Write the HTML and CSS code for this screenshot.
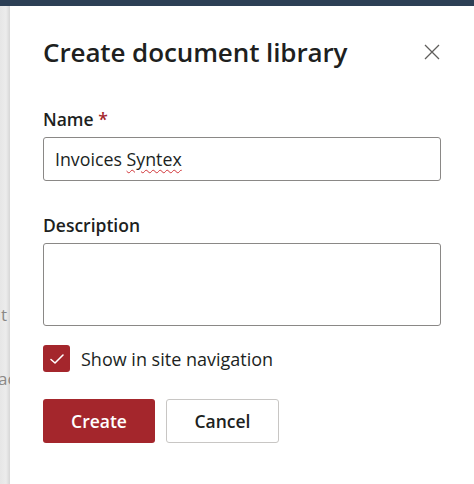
FILE: index.html
```html
<!DOCTYPE html>
<html>
<head>
<meta charset="utf-8">
<link rel="stylesheet" href="styles.css">
</head>
<body>
<div class="topbar"></div>
<div class="main">
  <div class="backdrop">
    <span class="ghost ghost-t">t</span>
    <span class="ghost ghost-a">ac</span>
  </div>
  <div class="panel">
    <div class="header">
      <h1 class="title">Create document library</h1>
      <svg class="close" width="16" height="16" viewBox="0 0 16 16"><path d="M1 1L15 15M15 1L1 15" stroke="#605e5c" stroke-width="1.3" fill="none"/></svg>
    </div>
    <label class="label label-name">Name <span class="req">*</span></label>
    <div class="input"><span class="val">Invoices <span class="spell">Syntex</span></span></div>
    <label class="label label-desc">Description</label>
    <div class="textarea"></div>
    <div class="check-row">
      <span class="checkbox"><svg width="16" height="12" viewBox="0 0 16 12"><path d="M2 6.5L6 10L14 2" stroke="#fff" stroke-width="1.6" fill="none" stroke-linecap="round" stroke-linejoin="round"/></svg></span>
      <span class="check-label">Show in site navigation</span>
    </div>
    <div class="buttons">
      <button class="btn btn-primary">Create</button>
      <button class="btn btn-default">Cancel</button>
    </div>
  </div>
</div>
</body>
</html>
```
FILE: styles.css
```css
html, body { margin: 0; padding: 0; background: #fff; }
body { font-family: "Open Sans", "Noto Sans", sans-serif; color: #201f1e; width: 474px; height: 484px; overflow: hidden; }
.topbar { height: 6px; background: #2c3f55; }
.main { display: flex; height: 478px; }
.backdrop { width: 10px; flex: none; position: relative; overflow: hidden; background: linear-gradient(to right, #e6e6e6, #ececec 60%, #d6d6d6); }
.ghost { position: absolute; color: #8a8886; font-size: 17px; font-family: "Open Sans", sans-serif; }
.ghost-t { left: 1px; top: 297px; }
.ghost-a { left: -2px; top: 361px; }
.panel { flex: 1; padding: 0 33px 0 33px; box-sizing: border-box; }
.header { display: flex; align-items: center; justify-content: space-between; height: 83px; padding-top: 9px; box-sizing: border-box; }
.title { margin: 0; font-size: 26px; line-height: 34px; font-weight: 600; letter-spacing: -0.1px; color: #201f1e; }
.close { margin-right: 1px; }
.label { display: block; font-size: 17.5px; font-weight: 600; line-height: 24px; }
.label-name { margin-top: 18px; }
.req { color: #a4262c; }
.input { margin-top: 6px; height: 44px; border: 1px solid #8a8886; border-radius: 3px; box-sizing: border-box; display: flex; align-items: center; padding-left: 11px; font-size: 17.8px; }
.spell { text-decoration: underline wavy #d13438; text-decoration-thickness: 1px; text-underline-offset: 3px; }
.label-desc { margin-top: 32px; }
.textarea { margin-top: 6px; height: 83px; border: 1px solid #8a8886; border-radius: 3px; box-sizing: border-box; }
.check-row { display: flex; align-items: center; margin-top: 19px; }
.checkbox { width: 27px; height: 27px; background: #a4262c; border-radius: 3px; display: flex; align-items: center; justify-content: center; }
.check-label { margin-left: 11px; font-size: 18px; }
.buttons { display: flex; gap: 11px; margin-top: 27px; }
.btn { height: 44px; width: 113px; border-radius: 3px; font-family: "Open Sans", sans-serif; font-size: 17.5px; font-weight: 600; box-sizing: border-box; padding: 0; }
.btn-primary { background: #a4262c; color: #fff; border: none; width: 112px; }
.btn-default { background: #fff; color: #201f1e; border: 1px solid #c8c6c4; }
```
